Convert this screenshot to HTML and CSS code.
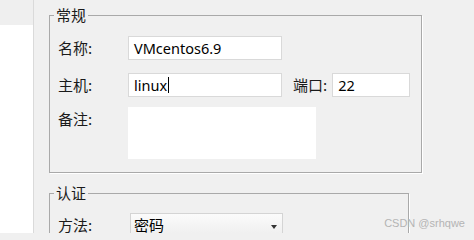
FILE: index.html
```html
<!DOCTYPE html>
<html lang="zh-CN">
<head>
<meta charset="utf-8">
<title>会话属性</title>
<link rel="stylesheet" href="styles.css">
</head>
<body>
<div class="sidebar">
  <div class="sidebar-top"></div>
  <div class="sidebar-rest"></div>
</div>
<div class="content">
  <fieldset class="group group-general">
    <legend class="legend">常规</legend>
    <div class="row">
      <span class="label">名称:</span>
      <div class="field field-name">VMcentos6.9</div>
    </div>
    <div class="row">
      <span class="label">主机:</span>
      <div class="field field-host">linux<span class="caret"></span></div>
      <span class="label label-port">端口:</span>
      <div class="field field-port">22</div>
    </div>
    <div class="row row-top">
      <span class="label label-note">备注:</span>
      <div class="field field-note"></div>
    </div>
  </fieldset>
  <fieldset class="group group-auth">
    <legend class="legend">认证</legend>
    <div class="row">
      <span class="label label-method">方法:</span>
      <div class="select">密码<span class="arrow"></span></div>
    </div>
  </fieldset>
</div>
<div class="watermark">CSDN @srhqwe</div>
</body>
</html>
```

FILE: styles.css
```css
html, body {
  margin: 0;
  padding: 0;
}
body {
  width: 474px;
  height: 233px;
  overflow: hidden;
  display: flex;
  background: #f0f0f0;
  font-family: "Noto Sans", "Noto Sans CJK SC", sans-serif;
  font-size: 15px;
  color: #000;
  position: relative;
}
.sidebar {
  width: 33px;
  flex: none;
  display: flex;
  flex-direction: column;
  border-right: 1px solid #dadada;
}
.sidebar-top {
  height: 25px;
  background: #efefef;
}
.sidebar-rest {
  flex: 1;
  background: #ffffff;
}
.content {
  padding: 5px 0 0 15px;
  display: flex;
  flex-direction: column;
  gap: 10px;
}
.group {
  margin: 0;
  box-sizing: border-box;
  border: 1px solid #a9a9a9;
  box-shadow: 1px 1px 0 #ffffff;
  padding: 11px 0 13px 8px;
  display: flex;
  flex-direction: column;
  gap: 13px;
  min-width: 0;
}
.group-general {
  width: 373px;
}
.group-auth {
  width: 360px;
  height: 120px;
  padding-top: 10px;
}
.legend {
  padding: 0 2px;
  margin-left: -4px;
  line-height: 20px;
  font-family: "Noto Sans CJK SC", sans-serif;
  color: #1a1a1a;
}
.row {
  display: flex;
  align-items: center;
  height: 24px;
}
.row-top {
  align-items: flex-start;
  height: auto;
  margin-top: -3px;
}
.label {
  width: 70px;
  flex: none;
  line-height: 20px;
  font-family: "Noto Sans CJK SC", sans-serif;
  color: #1a1a1a;
}
.label-note {
  margin-top: 2px;
}
.label-method {
  width: 72px;
}
.label-port {
  width: auto;
  margin-left: 11px;
  margin-right: 5px;
}
.field {
  box-sizing: border-box;
  height: 24px;
  background: #fff;
  border: 1px solid #d9d9d9;
  padding-left: 5px;
  line-height: 22px;
  font-size: 14.5px;
  display: flex;
  align-items: center;
}
.field-name,
.field-host {
  width: 154px;
}
.field-port {
  width: 78px;
}
.field-note {
  width: 188px;
  height: 52px;
  border-color: #ffffff;
}
.caret {
  display: inline-block;
  width: 1px;
  height: 16px;
  background: #000;
  margin-left: 1px;
}
.select {
  box-sizing: border-box;
  width: 153px;
  height: 24px;
  border: 1px solid #d4d4d4;
  background: linear-gradient(#fbfbfb, #eeeeee);
  padding-left: 3px;
  line-height: 22px;
  font-family: "Noto Sans CJK SC", sans-serif;
  display: flex;
  align-items: center;
  justify-content: space-between;
  padding-right: 5px;
}
.arrow {
  width: 0;
  height: 0;
  border-left: 3.5px solid transparent;
  border-right: 3.5px solid transparent;
  border-top: 4px solid #333;
  margin-top: 3px;
}
.watermark {
  position: absolute;
  right: 9px;
  bottom: 4px;
  font-family: "Liberation Sans", sans-serif;
  font-size: 11px;
  color: #b4b4b4;
  line-height: 12px;
}
```
